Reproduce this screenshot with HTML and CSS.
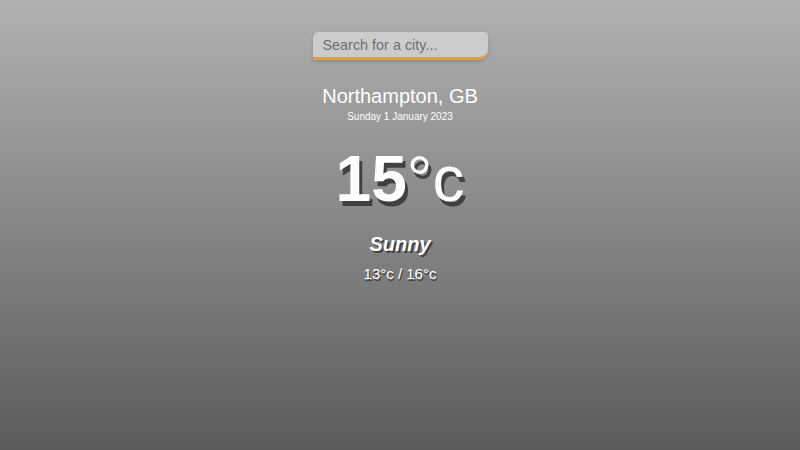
FILE: index.html
```html
<!DOCTYPE html>
<html>
<head>
<meta charset="utf-8">
<link rel="stylesheet" href="styles.css">
</head>
<body>
<main class="app">
  <div class="search-box">
    <input class="search-bar" type="text" placeholder="Search for a city...">
  </div>
  <div class="location-box">
    <div class="location">Northampton, GB</div>
    <div class="date">Sunday 1 January 2023</div>
  </div>
  <div class="weather-box">
    <div class="temp"><b>15</b>°c</div>
    <div class="weather">Sunny</div>
    <div class="range">13°c / 16°c</div>
  </div>
</main>
</body>
</html>
```
FILE: styles.css
```css
* { box-sizing: border-box; }
html, body { margin: 0; padding: 0; height: 100%; }
body {
  font-family: "Liberation Sans", Arial, sans-serif;
  background: linear-gradient(to bottom, #b1b1b1, #5b5b5b);
  color: #fff;
}
.app {
  display: flex;
  flex-direction: column;
  align-items: center;
  padding-top: 32px;
}
.search-box { width: 175px; }
.search-bar {
  display: block;
  width: 100%;
  height: 28px;
  padding: 0 10px;
  border: none;
  border-bottom: 3px solid #d9a044;
  border-radius: 6px 4px 10px 0;
  background: rgba(215, 215, 218, 0.75);
  box-shadow: 0 2px 4px rgba(0,0,0,0.15);
  font-family: "Liberation Sans", Arial, sans-serif;
  font-size: 14.4px;
  color: #555;
  outline: none;
}
.search-bar::placeholder { color: #707070; }
.location-box {
  margin-top: 24px;
  display: flex;
  flex-direction: column;
  align-items: center;
}
.location { font-size: 20px; line-height: 24px; }
.date { font-size: 10px; line-height: 13px; margin-top: 2px; }
.weather-box {
  display: flex;
  flex-direction: column;
  align-items: center;
}
.temp {
  margin-top: 18px;
  font-size: 64px;
  line-height: 76px;
  font-weight: 400;
  text-shadow: 3px 5px rgba(45, 45, 45, 0.8);
}
.temp b { font-weight: 700; }
.weather {
  margin-top: 15px;
  font-size: 20px;
  line-height: 24px;
  font-weight: 700;
  font-style: italic;
  text-shadow: 2px 2px rgba(50, 50, 50, 0.8);
}
.range {
  margin-top: 8px;
  font-size: 15px;
  line-height: 20px;
  text-shadow: 1px 2px rgba(50, 50, 50, 0.8);
}
```
